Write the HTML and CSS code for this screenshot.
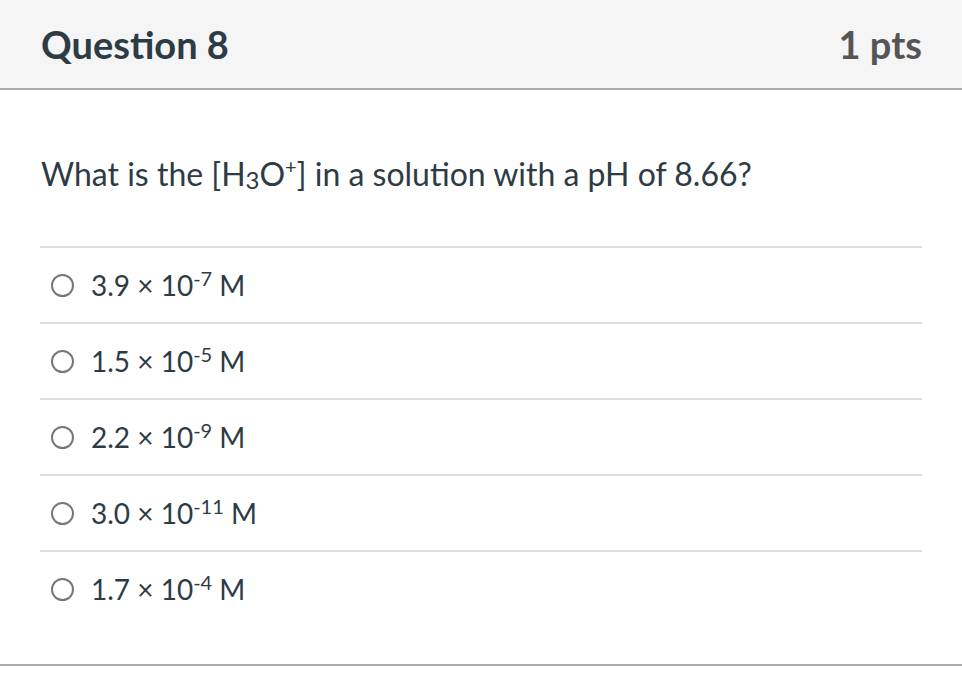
FILE: index.html
```html
<!DOCTYPE html>
<html>
<head>
<meta charset="utf-8">
<link rel="stylesheet" href="styles.css">
</head>
<body>
<div class="question">
  <div class="header">
    <h2 class="title">Question 8</h2>
    <span class="pts">1 pts</span>
  </div>
  <div class="content">
    <p class="text">What is the [H<sub>3</sub>O<sup>+</sup>] in a solution with a pH of 8.66?</p>
    <div class="answers">
      <div class="answer"><span class="radio"></span><span class="label">3.9 × 10<sup>-7</sup> M</span></div>
      <div class="answer"><span class="radio"></span><span class="label">1.5 × 10<sup>-5</sup> M</span></div>
      <div class="answer"><span class="radio"></span><span class="label">2.2 × 10<sup>-9</sup> M</span></div>
      <div class="answer"><span class="radio"></span><span class="label">3.0 × 10<sup>-11</sup> M</span></div>
      <div class="answer"><span class="radio"></span><span class="label">1.7 × 10<sup>-4</sup> M</span></div>
    </div>
  </div>
  <div class="footer"></div>
</div>
</body>
</html>
```
FILE: styles.css
```css
html, body {
  margin: 0;
  padding: 0;
  background: #ffffff;
}
body {
  font-family: Lato, "Noto Sans", sans-serif;
  color: #2d3b45;
}
.question {
  width: 962px;
}
.header {
  height: 88px;
  background: #f5f5f5;
  border-bottom: 2px solid #aaaaaa;
  display: flex;
  align-items: center;
  justify-content: space-between;
  padding: 0 40px 0 41px;
  box-sizing: content-box;
}
.title {
  margin: 0;
  font-size: 38px;
  font-weight: 700;
  line-height: 44px;
  color: #2d3b45;
}
.pts {
  font-size: 38px;
  font-weight: 700;
  line-height: 44px;
  color: #555555;
}
.content {
  padding: 0 40px 0 40px;
}
.text {
  margin: 0;
  padding: 64px 0 0 1px;
  height: 88px;
  box-sizing: border-box;
  font-size: 32px;
  line-height: 40px;
}
.text sub {
  font-size: 24px;
  line-height: 0;
  vertical-align: -3px;
}
.text sup {
  font-size: 20px;
  line-height: 0;
}
.answers {
  margin-top: 68px;
}
.answer {
  border-top: 2px solid #dddddd;
  height: 74px;
  display: flex;
  align-items: center;
  padding-left: 11px;
  font-size: 28px;
}
.radio {
  width: 19px;
  height: 19px;
  border: 2px solid #777777;
  border-radius: 50%;
  margin-right: 17px;
  flex: none;
}
.label sup {
  font-size: 20px;
  line-height: 0;
}
.footer {
  margin-top: 38px;
  border-top: 2px solid #aaaaaa;
}
```
